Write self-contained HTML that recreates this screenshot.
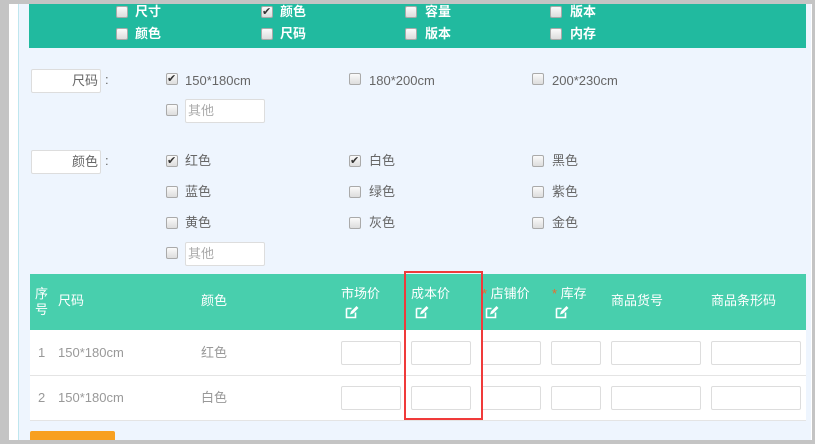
<!DOCTYPE html>
<html><head><meta charset="utf-8"><style>
*{margin:0;padding:0;box-sizing:border-box}
body{width:815px;height:444px;background:#c4c4c4;position:relative;overflow:hidden;font-family:"Liberation Sans","Noto Sans CJK SC",sans-serif;font-size:13px;line-height:16px;color:#666}
.a{position:absolute}
.wh{left:9px;top:4px;width:803px;height:436px;background:#fff}
.pn{left:18px;top:4px;width:793px;height:436px;background:#eef5fe;border-left:1px solid #bfe6ee}
.gb{left:29px;top:4px;width:777px;height:44px;background:#21ba9f}
.cb{width:12px;height:12px;border:1px solid #aaa;border-radius:2px;background:linear-gradient(#fafafa,#ddd)}
.cb.c::after{content:"✔";position:absolute;left:0px;top:-3px;font-size:11px;color:#333}
.gt{color:#fff;font-weight:bold}
.ip{background:#fff;border:1px solid #ddd;border-radius:2px}
.lb{line-height:22px}
.th{left:30px;top:274px;width:776px;height:56px;background:#48cfad}
.tb{left:30px;top:330px;width:776px;height:91px;background:#fff;border-bottom:1px solid #e4e4e4}
.hc{color:#fff;font-size:13px}
.ed{width:16px;height:14px}
.st{color:#f06a2a}
</style></head><body>
<div class="a wh"></div><div class="a pn"></div>
<div class="a gb"></div>
<div class="a cb" style="left:116px;top:6px"></div><div class="a gt" style="left:135px;top:4px">尺寸</div>
<div class="a cb c" style="left:261px;top:6px"></div><div class="a gt" style="left:280px;top:4px">颜色</div>
<div class="a cb" style="left:405px;top:6px"></div><div class="a gt" style="left:425px;top:4px">容量</div>
<div class="a cb" style="left:550px;top:6px"></div><div class="a gt" style="left:570px;top:4px">版本</div>
<div class="a cb" style="left:116px;top:28px"></div><div class="a gt" style="left:135px;top:26px">颜色</div>
<div class="a cb" style="left:261px;top:28px"></div><div class="a gt" style="left:280px;top:26px">尺码</div>
<div class="a cb" style="left:405px;top:28px"></div><div class="a gt" style="left:425px;top:26px">版本</div>
<div class="a cb" style="left:550px;top:28px"></div><div class="a gt" style="left:570px;top:26px">内存</div>
<div class="a ip lb" style="left:31px;top:69px;width:70px;height:24px;text-align:right;padding-right:2px">尺码</div>
<div class="a" style="left:105px;top:72px">:</div>
<div class="a cb c" style="left:166px;top:73px"></div><div class="a" style="left:185px;top:73px">150*180cm</div>
<div class="a cb" style="left:349px;top:73px"></div><div class="a" style="left:369px;top:73px">180*200cm</div>
<div class="a cb" style="left:532px;top:73px"></div><div class="a" style="left:552px;top:73px">200*230cm</div>
<div class="a cb" style="left:166px;top:104px"></div><div class="a ip lb" style="left:185px;top:99px;width:80px;height:24px;padding-left:2px;color:#aaa">其他</div>
<div class="a ip lb" style="left:31px;top:150px;width:70px;height:24px;text-align:right;padding-right:2px">颜色</div>
<div class="a" style="left:105px;top:153px">:</div>
<div class="a cb c" style="left:166px;top:155px"></div><div class="a" style="left:185px;top:153px">红色</div>
<div class="a cb c" style="left:349px;top:155px"></div><div class="a" style="left:369px;top:153px">白色</div>
<div class="a cb" style="left:532px;top:155px"></div><div class="a" style="left:552px;top:153px">黑色</div>
<div class="a cb" style="left:166px;top:186px"></div><div class="a" style="left:185px;top:184px">蓝色</div>
<div class="a cb" style="left:349px;top:186px"></div><div class="a" style="left:369px;top:184px">绿色</div>
<div class="a cb" style="left:532px;top:186px"></div><div class="a" style="left:552px;top:184px">紫色</div>
<div class="a cb" style="left:166px;top:217px"></div><div class="a" style="left:185px;top:215px">黄色</div>
<div class="a cb" style="left:349px;top:217px"></div><div class="a" style="left:369px;top:215px">灰色</div>
<div class="a cb" style="left:532px;top:217px"></div><div class="a" style="left:552px;top:215px">金色</div>
<div class="a cb" style="left:166px;top:247px"></div><div class="a ip lb" style="left:185px;top:242px;width:80px;height:24px;padding-left:2px;color:#aaa">其他</div>
<div class="a th"></div><div class="a tb"></div>
<div class="a" style="left:30px;top:375px;width:776px;height:1px;background:#e4e4e4"></div>
<div class="a hc" style="left:35px;top:286px;line-height:16px">序<br>号</div>
<div class="a hc" style="left:58px;top:293px">尺码</div>
<div class="a hc" style="left:201px;top:293px">颜色</div>
<svg width="0" height="0" style="position:absolute"><defs><g id="e"><path d="M1.5 3.5h5M1.5 3.5v9h9v-5" fill="none" stroke="#fff" stroke-width="1.6"/><path d="M5 9.5l1-3 5.5-5.5 2 2-5.5 5.5z" fill="#fff"/></g></defs></svg>
<div class="a hc" style="left:341px;top:286px">市场价</div><svg class="a ed" style="left:345px;top:305px"><use href="#e"/></svg>
<div class="a hc" style="left:411px;top:286px">成本价</div><svg class="a ed" style="left:415px;top:305px"><use href="#e"/></svg>
<div class="a hc" style="left:482px;top:286px"><span class="st">*</span> 店铺价</div><svg class="a ed" style="left:485px;top:305px"><use href="#e"/></svg>
<div class="a hc" style="left:552px;top:286px"><span class="st">*</span> 库存</div><svg class="a ed" style="left:555px;top:305px"><use href="#e"/></svg>
<div class="a hc" style="left:611px;top:293px">商品货号</div>
<div class="a hc" style="left:711px;top:293px">商品条形码</div>
<div class="a" style="left:38px;top:345px;color:#999">1</div><div class="a" style="left:58px;top:345px;color:#999">150*180cm</div><div class="a" style="left:201px;top:345px;color:#999">红色</div>
<div class="a" style="left:38px;top:390px;color:#999">2</div><div class="a" style="left:58px;top:390px;color:#999">150*180cm</div><div class="a" style="left:201px;top:390px;color:#999">白色</div>
<div class="a ip" style="left:341px;top:341px;width:60px;height:24px"></div>
<div class="a ip" style="left:411px;top:341px;width:60px;height:24px"></div>
<div class="a ip" style="left:481px;top:341px;width:60px;height:24px"></div>
<div class="a ip" style="left:551px;top:341px;width:50px;height:24px"></div>
<div class="a ip" style="left:611px;top:341px;width:90px;height:24px"></div>
<div class="a ip" style="left:711px;top:341px;width:90px;height:24px"></div>
<div class="a ip" style="left:341px;top:386px;width:60px;height:24px"></div>
<div class="a ip" style="left:411px;top:386px;width:60px;height:24px"></div>
<div class="a ip" style="left:481px;top:386px;width:60px;height:24px"></div>
<div class="a ip" style="left:551px;top:386px;width:50px;height:24px"></div>
<div class="a ip" style="left:611px;top:386px;width:90px;height:24px"></div>
<div class="a ip" style="left:711px;top:386px;width:90px;height:24px"></div>
<div class="a" style="left:404px;top:271px;width:79px;height:149px;border:2px solid #f03a3a"></div>
<div class="a" style="left:30px;top:431px;width:85px;height:9px;background:#f8a020;border-radius:2px 2px 0 0"></div>
</body></html>
